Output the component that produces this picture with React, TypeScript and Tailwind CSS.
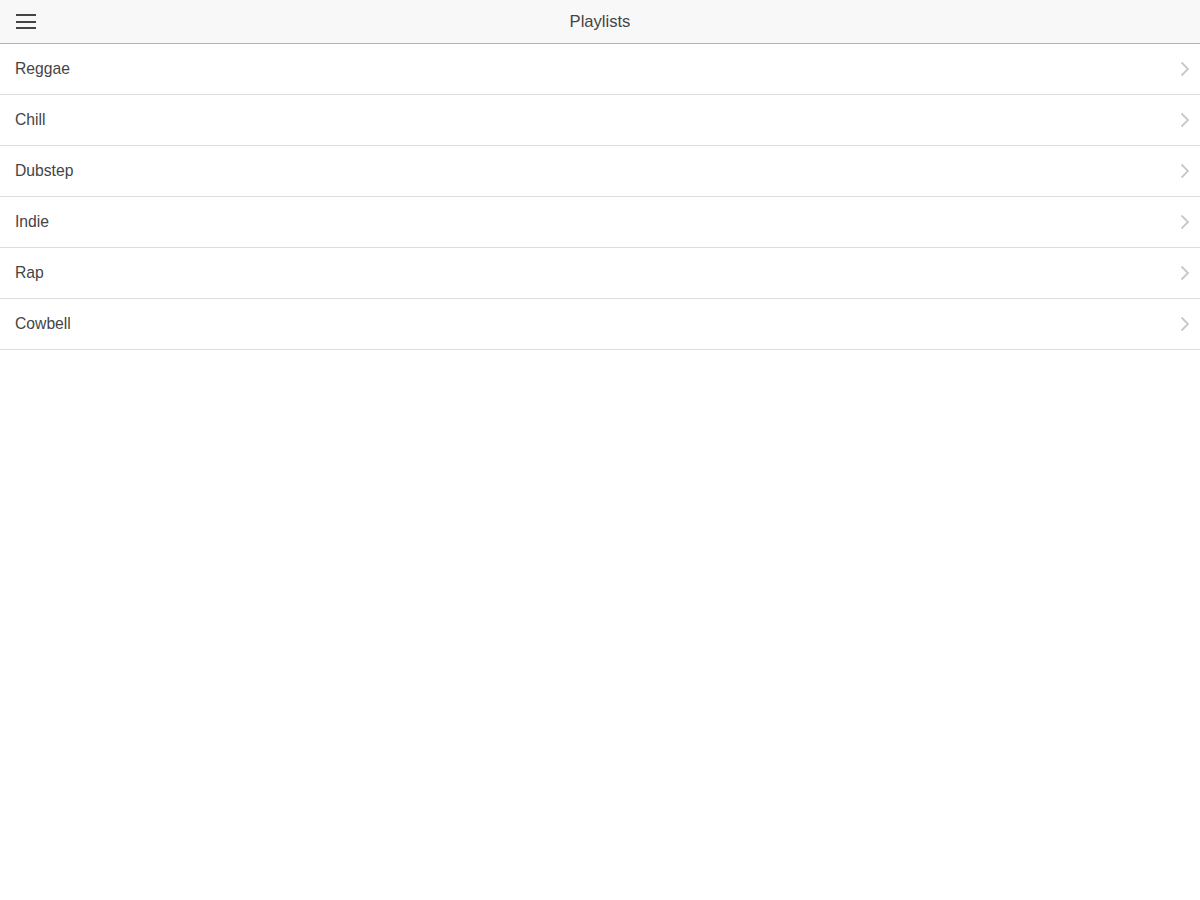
import React from 'react';

const playlists = ['Reggae', 'Chill', 'Dubstep', 'Indie', 'Rap', 'Cowbell'];

const App: React.FC = () => {
    return (
        <div className="min-h-screen bg-white text-[#444]" style={{ fontFamily: '"Liberation Sans", Arial, sans-serif' }}>
            {/* header bar */}
            <div className="relative flex h-[44px] items-center border-b border-[#b2b2b2] bg-[#f8f8f8]">
                <button className="ml-[16px] flex h-[43px] w-[20px] flex-col justify-center gap-[4.5px]">
                    <span className="block h-[2px] w-[20px] bg-[#444]" />
                    <span className="block h-[2px] w-[20px] bg-[#444]" />
                    <span className="block h-[2px] w-[20px] bg-[#444]" />
                </button>
                <div className="pointer-events-none absolute inset-x-0 top-0 flex h-[43px] items-center justify-center pt-[1px] text-[16.6px]">
                    Playlists
                </div>
            </div>

            {/* list */}
            <ul>
                {playlists.map((name) => (
                    <li key={name} className="flex h-[51px] items-center justify-between border-b border-[#ddd] pl-[15px] pr-[10px] text-[15.7px]">
                        <span className="-mt-[1px]">{name}</span>
                        <svg width="10" height="16" viewBox="0 0 10 16" className="-mt-[1px]">
                            <path d="M1.5 1.5 L8 8 L1.5 14.5" fill="none" stroke="#c8c8c8" strokeWidth="1.8" />
                        </svg>
                    </li>
                ))}
            </ul>
        </div>
    );
};

export default App;
